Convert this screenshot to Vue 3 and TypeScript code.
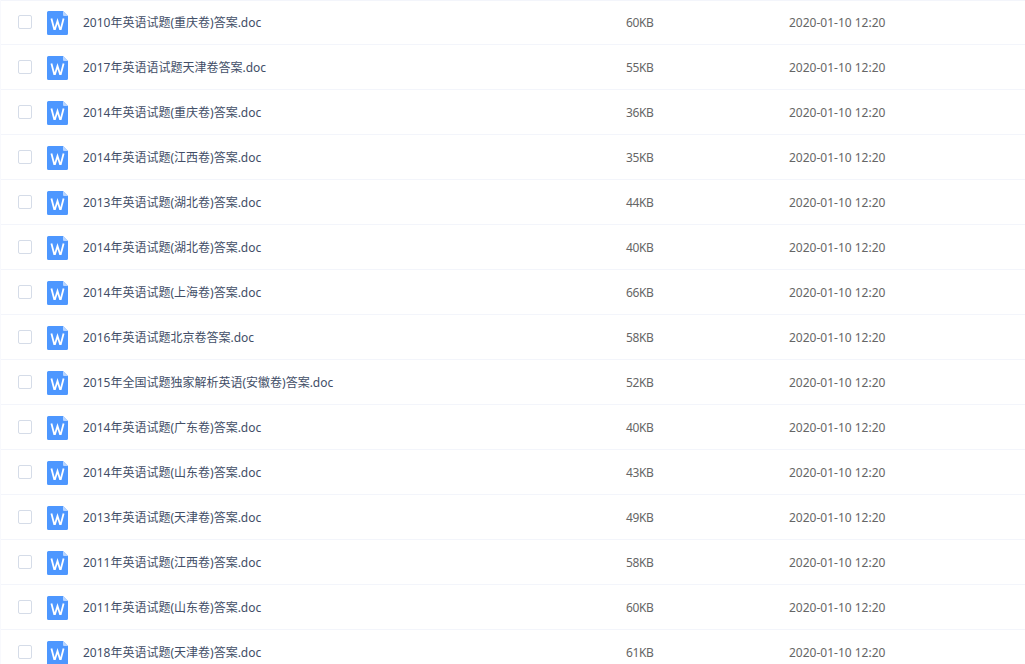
<script setup lang="ts">
interface FileRow { name: string; size: string }
const files: FileRow[] = [
  { name: '2010年英语试题(重庆卷)答案.doc', size: '60KB' },
  { name: '2017年英语语试题天津卷答案.doc', size: '55KB' },
  { name: '2014年英语试题(重庆卷)答案.doc', size: '36KB' },
  { name: '2014年英语试题(江西卷)答案.doc', size: '35KB' },
  { name: '2013年英语试题(湖北卷)答案.doc', size: '44KB' },
  { name: '2014年英语试题(湖北卷)答案.doc', size: '40KB' },
  { name: '2014年英语试题(上海卷)答案.doc', size: '66KB' },
  { name: '2016年英语试题北京卷答案.doc', size: '58KB' },
  { name: '2015年全国试题独家解析英语(安徽卷)答案.doc', size: '52KB' },
  { name: '2014年英语试题(广东卷)答案.doc', size: '40KB' },
  { name: '2014年英语试题(山东卷)答案.doc', size: '43KB' },
  { name: '2013年英语试题(天津卷)答案.doc', size: '49KB' },
  { name: '2011年英语试题(江西卷)答案.doc', size: '58KB' },
  { name: '2011年英语试题(山东卷)答案.doc', size: '60KB' },
  { name: '2018年英语试题(天津卷)答案.doc', size: '61KB' },
]
</script>

<template>
  <div class="list">
    <div v-for="f in files" :key="f.name" class="row">
      <span class="check"></span>
      <svg class="icon" width="21" height="24" viewBox="0 0 21 24">
        <path d="M1.500 0H16L21 5V22.500A1.500 1.500 0 0 1 19.500 24H1.500A1.500 1.500 0 0 1 0 22.500V1.500A1.500 1.500 0 0 1 1.500 0Z" fill="#4d97ff" />
        <path d="M16 0L21 5H17A1 1 0 0 1 16 4Z" fill="#b8d5ff" />
        <path d="M4.400 7.500L7.200 18H8L10.500 10L13 18H13.800L16.600 7.500" fill="none" stroke="#fff" stroke-width="1.800" />
      </svg>
      <span class="name">{{ f.name }}</span>
      <span class="size">{{ f.size }}</span>
      <span class="date">2020-01-10 12:20</span>
    </div>
  </div>
</template>

<style>
html, body { margin: 0; background: #fff; overflow: hidden; }
</style>

<style scoped>
.list {
  width: 1025px;
  height: 664px;
  overflow: hidden;
  box-sizing: border-box;
  border-left: 1px solid #f8f9fd;
  font-family: "Noto Sans", "Noto Sans CJK SC", sans-serif;
  font-size: 12px;
  line-height: 16px;
  color: #424e67;
}
.row {
  height: 44px;
  box-sizing: content-box;
  border-bottom: 1px solid #f3f5fb;
  display: flex;
  align-items: center;
  padding-left: 17px;
}
.row:first-child { box-shadow: inset 0 1px 0 #f3f5fb; }
.check {
  width: 12px;
  height: 12px;
  border: 1px solid #d5dce8;
  border-radius: 2px;
  flex: none;
  margin-right: 15px;
}
.icon { flex: none; margin: 2px 15px 0 0; }
.name, .size, .date { flex: none; margin-top: 2px; }
.name { width: 543px; white-space: nowrap; }
.size { width: 163px; color: #666; letter-spacing: -0.4px; }
.date { color: #666; }
</style>
